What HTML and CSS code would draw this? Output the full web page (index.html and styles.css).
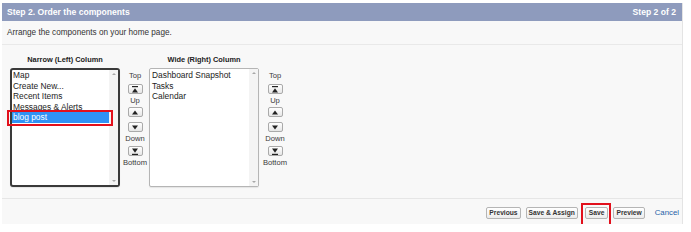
FILE: index.html
```html
<!DOCTYPE html>
<html>
<head>
<meta charset="utf-8">
<link rel="stylesheet" href="styles.css">
</head>
<body>
<div class="panel">
  <div class="header">
    <span class="h-title">Step 2. Order the components</span>
    <span class="h-step">Step 2 of 2</span>
  </div>
  <div class="desc">Arrange the components on your home page.</div>
  <div class="main">
    <div class="col">
      <div class="col-title">Narrow (Left) Column</div>
      <div class="listbox focused">
        <div class="items">
          <div class="item">Map</div>
          <div class="item">Create New...</div>
          <div class="item">Recent Items</div>
          <div class="item">Messages &amp; Alerts</div>
          <div class="item selected marked">blog post</div>
        </div>
        <div class="scroll"><span class="sa up"></span><span class="sa down"></span></div>
      </div>
    </div>
    <div class="movers">
      <div class="mlabel">Top</div>
      <div class="mbtn b-top"><svg width="8" height="7" viewBox="0 0 8 7"><rect x="1" y="0" width="6" height="1.2" fill="#222"/><polygon points="4,2.2 7,6.5 1,6.5" fill="#222"/></svg></div>
      <div class="mlabel l-up">Up</div>
      <div class="mbtn b-up"><svg width="8" height="7" viewBox="0 0 8 7"><polygon points="4,1.5 7,5.5 1,5.5" fill="#222"/></svg></div>
      <div class="mbtn b-down"><svg width="8" height="7" viewBox="0 0 8 7"><polygon points="1,1.5 7,1.5 4,5.5" fill="#222"/></svg></div>
      <div class="mlabel l-down">Down</div>
      <div class="mbtn b-bottom"><svg width="8" height="7" viewBox="0 0 8 7"><polygon points="1,0.5 7,0.5 4,4.8" fill="#222"/><rect x="1" y="5.8" width="6" height="1.2" fill="#222"/></svg></div>
      <div class="mlabel l-bottom">Bottom</div>
    </div>
    <div class="col right">
      <div class="col-title">Wide (Right) Column</div>
      <div class="listbox">
        <div class="items">
          <div class="item">Dashboard Snapshot</div>
          <div class="item">Tasks</div>
          <div class="item">Calendar</div>
        </div>
        <div class="scroll"><span class="sa up"></span><span class="sa down"></span></div>
      </div>
    </div>
    <div class="movers">
      <div class="mlabel">Top</div>
      <div class="mbtn b-top"><svg width="8" height="7" viewBox="0 0 8 7"><rect x="1" y="0" width="6" height="1.2" fill="#222"/><polygon points="4,2.2 7,6.5 1,6.5" fill="#222"/></svg></div>
      <div class="mlabel l-up">Up</div>
      <div class="mbtn b-up"><svg width="8" height="7" viewBox="0 0 8 7"><polygon points="4,1.5 7,5.5 1,5.5" fill="#222"/></svg></div>
      <div class="mbtn b-down"><svg width="8" height="7" viewBox="0 0 8 7"><polygon points="1,1.5 7,1.5 4,5.5" fill="#222"/></svg></div>
      <div class="mlabel l-down">Down</div>
      <div class="mbtn b-bottom"><svg width="8" height="7" viewBox="0 0 8 7"><polygon points="1,0.5 7,0.5 4,4.8" fill="#222"/><rect x="1" y="5.8" width="6" height="1.2" fill="#222"/></svg></div>
      <div class="mlabel l-bottom">Bottom</div>
    </div>
  </div>
  <div class="footer">
    <button class="btn">Previous</button>
    <button class="btn">Save &amp; Assign</button>
    <button class="btn save marked2">Save</button>
    <button class="btn prev">Preview</button>
    <a class="cancel">Cancel</a>
  </div>
</div>
</body>
</html>
```
FILE: styles.css
```css
html, body {
  margin: 0;
  padding: 0;
  background: #ffffff;
}
body {
  font-family: "Liberation Sans", Arial, sans-serif;
  color: #222;
}
.panel {
  margin: 3px 0 0 2px;
  width: 680px;
  background: #f8f8f8;
  border-right: 1px solid #e4e4e4;
}
.header {
  height: 18px;
  background: #8e9bbd;
  color: #ffffff;
  font-weight: bold;
  font-size: 8.6px;
  display: flex;
  align-items: center;
  justify-content: space-between;
  padding: 0 6px 0 5px;
}
.desc {
  height: 23px;
  border-bottom: 1px solid #e9e9e9;
  display: flex;
  align-items: center;
  padding-left: 5px;
  font-size: 8.2px;
  color: #333;
}
.main {
  display: flex;
  align-items: flex-start;
  padding: 10px 0 11px 8px;
}
.col {
  width: 110px;
  display: flex;
  flex-direction: column;
}
.col.right {
  margin-left: 3px;
}
.col-title {
  text-align: center;
  font-weight: bold;
  font-size: 7.4px;
  line-height: 10px;
  height: 10px;
  margin-bottom: 3px;
  color: #222;
}
.listbox {
  height: 119px;
  box-sizing: border-box;
  background: #fff;
  border: 1px solid #b5b5b5;
  border-radius: 2px;
  box-shadow: 0 1px 1px rgba(0,0,0,0.08);
  display: flex;
}
.listbox.focused {
  border: 2px solid #3a3a3a;
  border-radius: 3px;
}
.items {
  flex: 1;
}
.listbox:not(.focused) .items {
  padding-top: 1px;
  padding-left: 1px;
}
.item {
  font-size: 8.4px;
  line-height: 10.5px;
  height: 10.5px;
  padding-left: 1px;
  white-space: nowrap;
  color: #1c1c1c;
}
.item.selected {
  background: #3092f5;
  color: #fff;
}
.marked {
  position: relative;
}
.marked::after {
  content: "";
  position: absolute;
  left: -5px;
  right: -4px;
  top: -2px;
  bottom: -3px;
  border: 2.5px solid #e2101c;
}
.scroll {
  width: 9px;
  background: #f4f4f4;
  display: flex;
  flex-direction: column;
  justify-content: space-between;
  align-items: center;
  padding: 3px 0;
}
.sa {
  width: 0;
  height: 0;
  border-left: 2px solid transparent;
  border-right: 2px solid transparent;
}
.sa.up {
  border-bottom: 2.5px solid #a8a8a8;
}
.sa.down {
  border-top: 2.5px solid #a8a8a8;
}
.movers {
  width: 22px;
  margin-left: 4px;
  margin-top: 16px;
  display: flex;
  flex-direction: column;
  align-items: center;
}
.col.right + .movers {
  margin-left: 5px;
}
.mlabel {
  font-size: 7.6px;
  line-height: 10px;
  height: 10px;
  color: #3a3a3a;
}
.mbtn {
  width: 15px;
  height: 10px;
  box-sizing: border-box;
  border: 1px solid #aaaaaa;
  border-radius: 2px;
  background: linear-gradient(#ffffff, #e6e6e6);
  display: flex;
  align-items: center;
  justify-content: center;
}
.b-top { margin-top: 3px; }
.l-up { margin-top: 2px; }
.b-up { margin-top: 1px; }
.b-down { margin-top: 5px; }
.l-down { margin-top: 2px; }
.b-bottom { margin-top: 2px; }
.l-bottom { margin-top: 2px; }
.footer {
  border-top: 1px solid #e6e6e6;
  height: 23px;
  display: flex;
  align-items: center;
  justify-content: flex-end;
  padding: 2px 3px 0 0;
  box-sizing: content-box;
}
.btn {
  font-family: "Liberation Sans", Arial, sans-serif;
  font-weight: bold;
  font-size: 6.7px;
  color: #333;
  height: 12px;
  padding: 0 2px;
  margin: 0 0 0 5px;
  border: 1px solid #b5b5b5;
  border-radius: 2px;
  background: linear-gradient(#ffffff, #ececec);
  line-height: 10px;
}
.btn.save {
  margin-left: 7px;
  padding: 0 3px;
}
.marked2 {
  position: relative;
}
.marked2::after {
  content: "";
  position: absolute;
  left: -5px;
  right: -4px;
  top: -5px;
  bottom: -11px;
  border: 2.5px solid #e2101c;
}
.cancel {
  font-size: 7.8px;
  color: #1f5fa8;
  margin-left: 10px;
}
```
